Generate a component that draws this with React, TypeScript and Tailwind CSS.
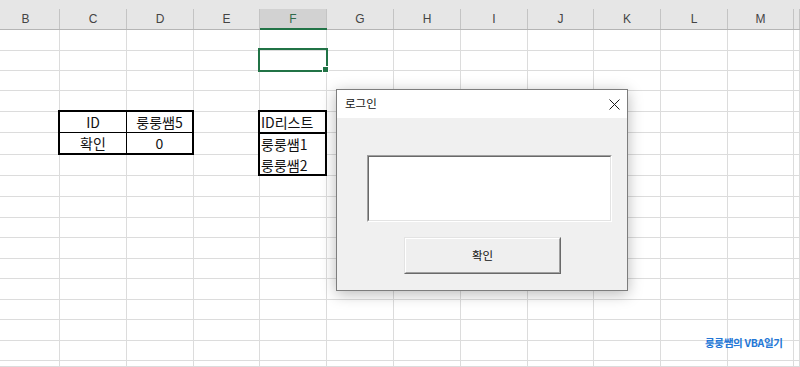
import React from 'react';

const COLS = ['B', 'C', 'D', 'E', 'F', 'G', 'H', 'I', 'J', 'K', 'L', 'M', ''];
const BODY_ROWS = 17;

const KR = "font-['Noto_Sans_CJK_KR','Noto_Sans',sans-serif]";

function HeaderCell({ label }: { label: string }) {
  const selected = label === 'F';
  return (
    <div
      className={
        selected
          ? 'flex flex-col bg-[#e6e6e6] border-b-2 border-[#217346]'
          : 'flex flex-col bg-[#e6e6e6] border-b border-[#b5b5b5]'
      }
    >
      <div
        className={
          'mt-[9px] flex-1 flex items-center justify-center border-r border-[#c4c4c4] text-[12px] font-[Liberation_Sans,sans-serif] ' +
          (selected ? 'bg-[#d2d2d2] text-[#2f6b4a]' : 'text-[#444]') +
          (label === 'B' ? ' pr-[8px]' : '')
        }
      >
        {label}
      </div>
    </div>
  );
}

function CloseIcon() {
  return (
    <svg width="11" height="11" viewBox="0 0 11 11">
      <path d="M0.5 0.5 L10.5 10.5 M10.5 0.5 L0.5 10.5" stroke="#1b1b1b" strokeWidth="1" fill="none" />
    </svg>
  );
}

function LoginDialog() {
  return (
    <div className="absolute left-[336px] top-[89px] w-[292px] h-[202px] border border-[#7d7d7d] bg-[#f0f0f0] flex flex-col shadow-[0_3px_14px_rgba(0,0,0,0.28)]">
      {/* Title bar */}
      <div className="h-[28px] bg-white flex items-center justify-between pl-[8px] pr-[7px]">
        <span className={`${KR} text-[11.5px] text-[#111]`}>로그인</span>
        <CloseIcon />
      </div>

      {/* Body */}
      <div className="flex-1 flex flex-col pt-[37px] pl-[30px]">
        <div className="w-[245px] h-[67px] border-t border-l border-r border-b border-t-[#a0a0a0] border-l-[#a0a0a0] border-r-white border-b-white">
          <div className="w-full h-full bg-white border-t border-l border-r border-b border-t-[#696969] border-l-[#696969] border-r-[#e3e3e3] border-b-[#e3e3e3]" />
        </div>
        <div className="ml-[37px] mt-[15px] w-[157px] h-[37px] border-t border-l border-r border-b border-t-[#e3e3e3] border-l-[#e3e3e3] border-r-[#696969] border-b-[#696969]">
          <div className="w-full h-full bg-[#efefef] border-t border-l border-r border-b border-t-white border-l-white border-r-[#a0a0a0] border-b-[#a0a0a0] flex items-center justify-center">
            <span className={`${KR} text-[11.5px] text-[#111]`}>확인</span>
          </div>
        </div>
      </div>
    </div>
  );
}

export default function App() {
  return (
    <div className="relative w-[800px] h-[367px] overflow-hidden bg-white">
      <div className="grid h-full grid-cols-[60px_67px_67px_66px_67px_67px_67px_67px_66px_67px_67px_66px_1fr] grid-rows-[30px_21px_20px_20px_21px_21px_22px_21px_21px_21px_20px_21px_20px_21px_20px_21px_20px_1fr]">
        {/* Sheet background: headers + gridlines */}
        <div className="col-span-full row-span-full grid grid-cols-subgrid grid-rows-subgrid">
          {COLS.map((c, i) => (
            <HeaderCell key={'h' + i} label={c} />
          ))}
          {Array.from({ length: BODY_ROWS }).map((_, r) =>
            COLS.map((_c, i) => (
              <div key={r + '-' + i} className="border-r border-b border-[#dcdcdc]" />
            ))
          )}
        </div>

        {/* Active cell F2 */}
        <div className="col-start-5 row-start-3 -ml-[2px] -mt-[3px] -mr-[1px] -mb-[1px] relative border-2 border-[#217346]">
          <div className="absolute -right-[3px] -bottom-[3px] w-[7px] h-[7px] bg-[#217346] border border-white" />
        </div>

        {/* ID table */}
        <div
          className={`col-start-2 col-span-2 row-start-6 row-span-2 -ml-[2px] -mt-[2px] border-2 border-black bg-white grid grid-cols-[67px_1fr] grid-rows-[21px_1fr] ${KR} text-[14px] text-[#111]`}
        >
          <div className="border-r border-b border-black flex items-center justify-center">ID</div>
          <div className="border-b border-black flex items-center justify-center">룽룽쌤5</div>
          <div className="border-r border-black flex items-center justify-center">확인</div>
          <div className="flex items-center justify-center">0</div>
        </div>

        {/* ID list */}
        <div
          className={`col-start-5 row-start-6 row-span-3 -ml-[2px] -mt-[2px] border-2 border-black bg-white flex flex-col ${KR} text-[14px] text-[#111]`}
        >
          <div className="h-[22px] border-b-2 border-black flex items-center pl-[1px]">ID리스트</div>
          <div className="h-[21px] flex items-center pl-[1px]">룽룽쌤1</div>
          <div className="flex-1 flex items-center pl-[1px]">룽룽쌤2</div>
        </div>
      </div>

      <LoginDialog />

      {/* Watermark */}
      <div className={`absolute left-[705px] top-[335px] ${KR} text-[10.5px] font-bold text-[#2477d6] tracking-[-0.3px]`}>
        룽룽쌤의 VBA일기
      </div>
    </div>
  );
}
